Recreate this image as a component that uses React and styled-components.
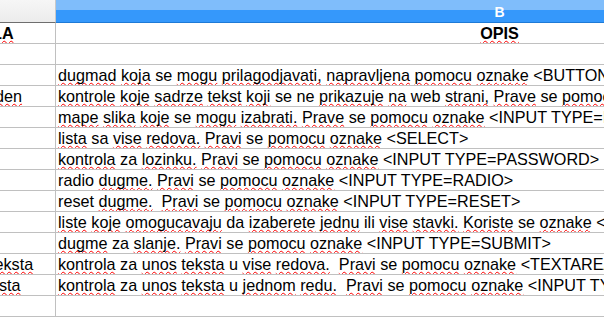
import React from "react";
import styled, { createGlobalStyle } from "styled-components";

// words the spell checker accepts (no red wave under them)
const knownWords = ["se", "u", "i", "da", "ne", "ili", "web", "radio", "reset", "za", "sa"];

const rows = [
  { a: "LA", aIndent: -8, b: "OPIS", head: true },
  { a: "", b: "" },
  { a: "", b: "dugmad koja se mogu prilagodjavati, napravljena pomocu oznake <BUTTON>" },
  {
    a: "den",
    aIndent: -5,
    b: "kontrole koje sadrze tekst koji se ne prikazuje na web strani, Prave se pomocu oznake <INPUT TYPE=HIDDEN>",
  },
  { a: "", b: "mape slika koje se mogu izabrati. Prave se pomocu oznake <INPUT TYPE=IMAGE>" },
  { a: "", b: "lista sa vise redova. Pravi se pomocu oznake <SELECT>" },
  { a: "", b: "kontrola za lozinku. Pravi se pomocu oznake <INPUT TYPE=PASSWORD>" },
  { a: "", b: "radio dugme. Pravi se pomocu oznake <INPUT TYPE=RADIO>" },
  { a: "", b: "reset dugme.  Pravi se pomocu oznake <INPUT TYPE=RESET>" },
  {
    a: "",
    b: "liste koje omogucavaju da izaberete jednu ili vise stavki. Koriste se oznake <SELECT> i <OPTION>",
  },
  { a: "", b: "dugme za slanje. Pravi se pomocu oznake <INPUT TYPE=SUBMIT>" },
  {
    a: "teksta",
    aIndent: -10,
    b: "kontrola za unos teksta u vise redova.  Pravi se pomocu oznake <TEXTAREA>",
  },
  {
    a: "sta",
    aIndent: -1,
    b: "kontrola za unos teksta u jednom redu.  Pravi se pomocu oznake <INPUT TYPE=TEXT>",
  },
  { a: "", b: "" },
];

// split a cell's text and mark the words the checker flags
function Checked({ text }) {
  const parts = text.split(/(\s+)/);
  return parts.map((part, i) => {
    const word = part.replace(/[.,]/g, "");
    const flagged =
      /^[a-zA-Z]+$/.test(word) &&
      word !== word.toUpperCase() &&
      !knownWords.includes(word.toLowerCase());
    const allCaps = word === "OPIS" || word === "LA";
    return flagged || allCaps ? <Wave key={i}>{part}</Wave> : part;
  });
}

function App() {
  return (
    <>
      <GlobalStyle />
      <Sheet>
        <HeaderRow>
          <ColHead $width={56} />
          <ColHead $width={888} $selected>
            B
          </ColHead>
        </HeaderRow>
        {rows.map((row, index) => (
          <Row key={index}>
            <CellA $bold={row.head}>
              <CellText style={{ textIndent: row.aIndent || 0 }}>
                <Checked text={row.a} />
              </CellText>
            </CellA>
            <CellB $bold={row.head} $center={row.head}>
              <CellText>
                <Checked text={row.b} />
              </CellText>
            </CellB>
          </Row>
        ))}
      </Sheet>
    </>
  );
}

const GlobalStyle = createGlobalStyle`
  html, body {
    margin: 0;
    padding: 0;
    background: #ffffff;
    overflow: hidden;
  }
  body {
    font-family: "Liberation Sans", Arial, sans-serif;
  }
`;

const Sheet = styled.div`
  display: flex;
  flex-direction: column;
  width: 604px;
  height: 317px;
  overflow: hidden;
`;

const HeaderRow = styled.div`
  display: flex;
  height: 23px;
  flex-shrink: 0;
`;

const ColHead = styled.div`
  box-sizing: border-box;
  flex: 0 0 ${(p) => p.$width}px;
  height: 23px;
  display: flex;
  align-items: center;
  justify-content: center;
  padding-top: 2px;
  font-size: 14px;
  font-weight: bold;
  color: #ffffff;
  border-right: 1px solid ${(p) => (p.$selected ? "#2a86e6" : "#c9c9c9")};
  border-bottom: 1px solid ${(p) => (p.$selected ? "#1e7ad6" : "#6e6e6e")};
  background: ${(p) =>
    p.$selected
      ? "linear-gradient(#7fbdfb 0px, #7fbdfb 10px, #3598fb 10px, #3598fb 100%)"
      : "linear-gradient(#f6f6f6, #ececec)"};
`;

const Row = styled.div`
  display: flex;
  height: 21px;
  flex-shrink: 0;
`;

const Cell = styled.div`
  box-sizing: border-box;
  height: 21px;
  display: flex;
  align-items: flex-end;
  overflow: hidden;
  white-space: pre;
  border-bottom: 1px solid #c0c0c0;
  font-size: 16.2px;
  line-height: 18px;
  color: #000000;
  font-weight: ${(p) => (p.$bold ? "bold" : "normal")};
  padding-bottom: 1px;
`;

const CellA = styled(Cell)`
  flex: 0 0 56px;
  border-right: 1px solid #c0c0c0;
`;

const CellB = styled(Cell)`
  flex: 0 0 888px;
  justify-content: ${(p) => (p.$center ? "center" : "flex-start")};
  padding-left: ${(p) => (p.$center ? "0" : "2px")};
  border-right: 1px solid #c0c0c0;
`;

const CellText = styled.span`
  display: block;
`;

const Wave = styled.span`
  text-decoration: underline wavy #ff0000;
  text-decoration-thickness: 1px;
  text-underline-offset: 1px;
  text-decoration-skip-ink: none;
`;

export default App;
